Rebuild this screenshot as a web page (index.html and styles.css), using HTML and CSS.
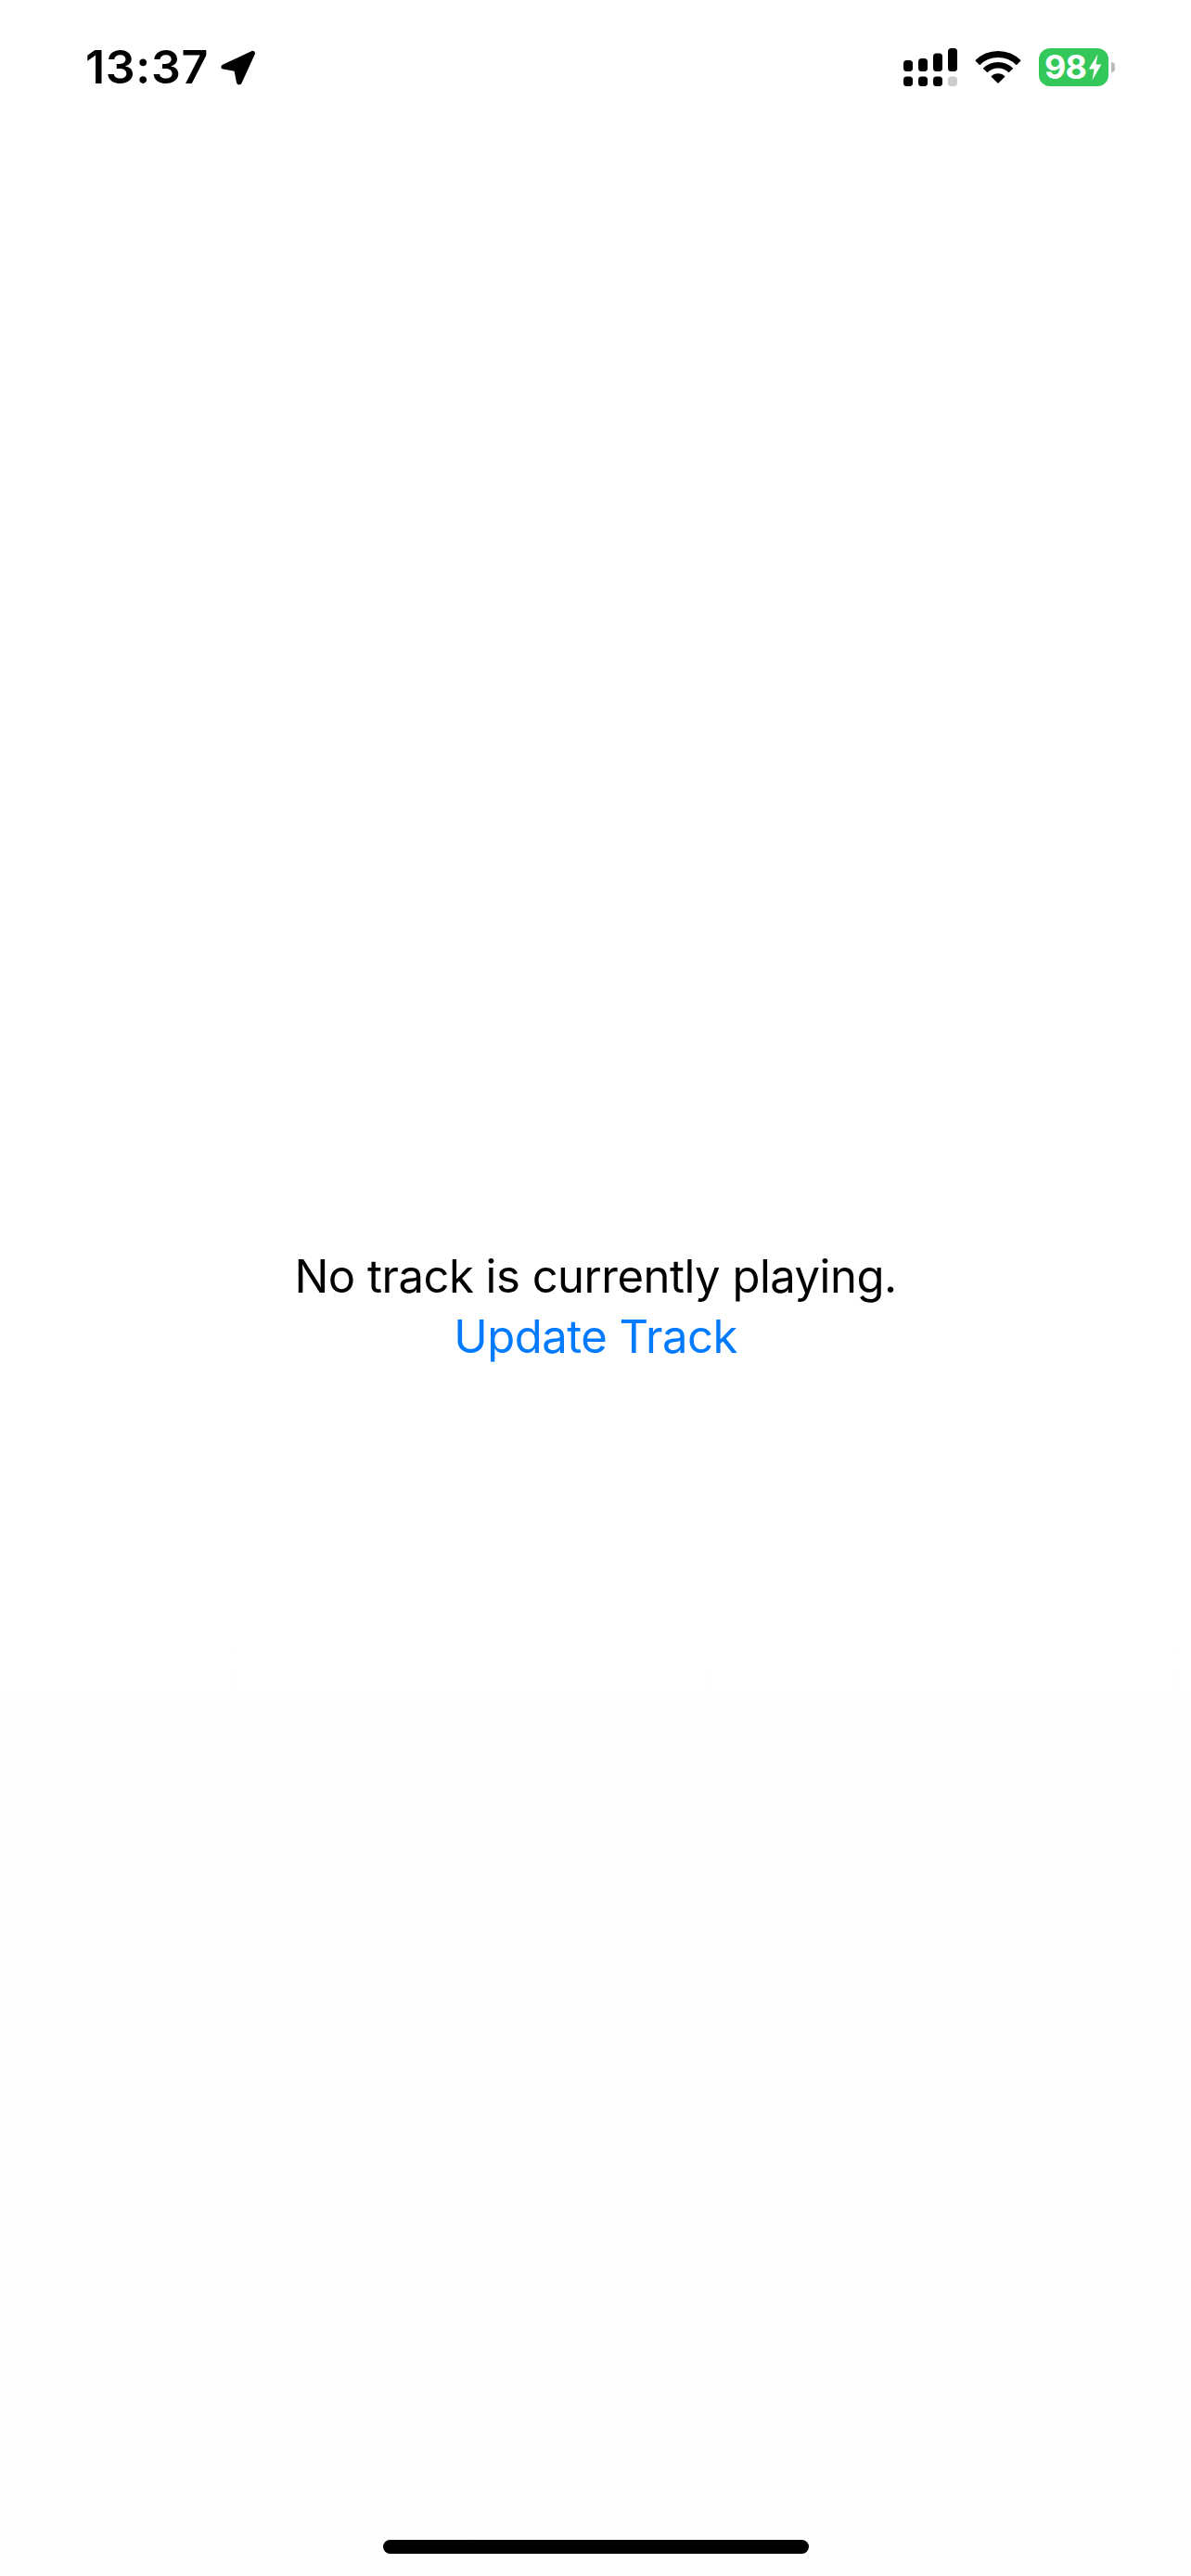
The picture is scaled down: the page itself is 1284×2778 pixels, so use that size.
FILE: index.html
```html
<!DOCTYPE html>
<html lang="en">
<head>
    <meta charset="UTF-8">
    <title>Now Playing</title>
    <link rel="stylesheet" href="styles.css">
</head>
<body>
<header class="status-bar">
    <div class="status-left">
        <span class="time">13:37</span>
        <svg class="location-icon" viewBox="0 0 39 38" aria-hidden="true">
            <path d="M3.5 15.5 L34 1.2 C36.6 0 38.8 2.3 37.6 4.8 L23.6 35.5 C22.3 38.3 18.6 38 18 35 L15.6 22.8 L3.6 20.6 C0.6 20 0.6 16.8 3.5 15.5 Z"/>
        </svg>
    </div>
    <div class="status-right">
        <svg class="signal-icon" viewBox="0 0 58 41" aria-hidden="true">
            <rect x="0" y="13" width="10" height="12" rx="3.5"/>
            <rect x="16" y="11" width="10" height="14" rx="3.5"/>
            <rect x="32" y="5.5" width="10" height="19.5" rx="3.5"/>
            <rect x="48" y="0" width="10" height="25" rx="3.5"/>
            <rect x="0" y="30.5" width="10" height="10.5" rx="3.5"/>
            <rect x="16" y="30.5" width="10" height="10.5" rx="3.5"/>
            <rect x="32" y="30.5" width="10" height="10.5" rx="3.5"/>
            <rect class="signal-off" x="48" y="30.5" width="10" height="10.5" rx="3.5"/>
        </svg>
        <svg class="wifi-icon" viewBox="0 0 50 35" aria-hidden="true">
            <path class="wifi-arc" stroke-width="7" d="M2.73 12.73 A31.5 31.5 0 0 1 47.27 12.73"/>
            <path class="wifi-arc" stroke-width="6.5" d="M11.03 21.03 A19.75 19.75 0 0 1 38.97 21.03"/>
            <path d="M25 35 L17.4 27.4 A10.7 10.7 0 0 1 32.6 27.4 Z"/>
        </svg>
        <div class="battery">
            <div class="battery-body">
                <span class="battery-level">98</span>
                <svg class="bolt-icon" viewBox="0 0 15 29" aria-hidden="true">
                    <path d="M10.5 0.5 L0.8 16.5 L6.6 16.5 L4.5 28.5 L14.4 11.6 L8.5 11.6 Z"/>
                </svg>
            </div>
            <div class="battery-nub"></div>
        </div>
    </div>
</header>
<main class="content">
    <p class="message">No track is currently playing.</p>
    <a class="update-link" href="#">Update Track</a>
</main>
<footer class="home-area">
    <div class="home-indicator"></div>
</footer>
</body>
</html>
```

FILE: styles.css
```css
html, body {
    margin: 0;
    height: 2778px;
}

body {
    display: flex;
    flex-direction: column;
    background: linear-gradient(#ffffff 40%, #fefefe 100%);
    font-family: Inter, "Liberation Sans", sans-serif;
    color: #000;
}

.status-bar {
    display: flex;
    justify-content: space-between;
    align-items: center;
    height: 41px;
    padding: 52px 82px 0 92px;
}

.status-left, .status-right {
    display: flex;
    align-items: center;
}

.status-left {
    gap: 12px;
}

.status-right {
    gap: 19px;
}

.time {
    font-size: 50px;
    font-weight: 600;
    letter-spacing: 0.7px;
    line-height: 41px;
}

.location-icon {
    width: 39px;
    height: 38px;
}

.signal-icon {
    width: 58px;
    height: 41px;
}

.signal-off {
    fill: #ccc;
}

.wifi-icon {
    width: 50px;
    height: 35px;
}

.wifi-arc {
    fill: none;
    stroke: #000;
}

.battery {
    display: flex;
    align-items: center;
    gap: 3px;
}

.battery-body {
    display: flex;
    align-items: center;
    gap: 2px;
    box-sizing: border-box;
    width: 75px;
    height: 41px;
    padding-left: 6px;
    border-radius: 12px;
    background: #34c759;
}

.battery-level {
    font-size: 36px;
    font-weight: 700;
    letter-spacing: -1px;
    line-height: 41px;
    color: #fff;
}

.bolt-icon {
    width: 15px;
    height: 29px;
    fill: #fff;
}

.battery-nub {
    width: 4px;
    height: 11px;
    border-radius: 0 6px 6px 0;
    background: #bbb;
}

.content {
    flex: 1;
    display: flex;
    flex-direction: column;
    align-items: center;
    justify-content: center;
    padding-bottom: 14px;
    font-size: 49px;
    letter-spacing: -0.5px;
    line-height: 65px;
}

.message {
    margin: 0;
}

.update-link {
    color: #007aff;
    text-decoration: none;
}

.home-area {
    display: flex;
    justify-content: center;
    padding-bottom: 24px;
}

.home-indicator {
    width: 459px;
    height: 15px;
    border-radius: 8px;
    background: #000;
}
```
